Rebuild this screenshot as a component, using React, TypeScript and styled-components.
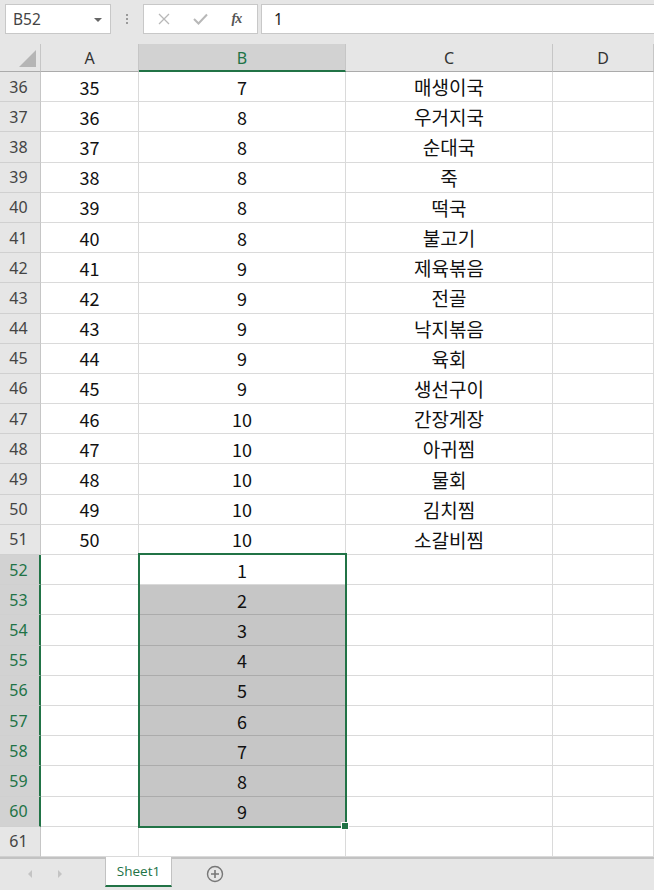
import React from "react";
import styled, { createGlobalStyle, css } from "styled-components";

const GREEN = "#217346";
const FONT = `"Noto Sans CJK KR", "Noto Sans", sans-serif`;

const Global = createGlobalStyle`
  html, body { margin: 0; padding: 0; background: #e6e6e6; }
  body { font-family: ${FONT}; width: 654px; height: 890px; overflow: hidden; }
`;

const Page = styled.div`
  width: 654px;
  height: 890px;
  display: flex;
  flex-direction: column;
  background: #e6e6e6;
  overflow: hidden;
`;

const FormulaBar = styled.div`
  height: 30px;
  padding: 4px 0 0 5px;
  display: flex;
  align-items: stretch;
  flex-shrink: 0;
`;

const Box = styled.div`
  background: #fff;
  border: 1px solid #c8c8c8;
  box-sizing: border-box;
  display: flex;
  align-items: center;
`;

const NameBox = styled(Box)`
  width: 106px;
  padding: 0 8px 0 7px;
  justify-content: space-between;
  font-size: 15.5px;
  color: #444;
  font-family: "Noto Sans", sans-serif;
`;

const DropArrow = styled.span`
  width: 0;
  height: 0;
  border-left: 4px solid transparent;
  border-right: 4px solid transparent;
  border-top: 4px solid #666;
  margin-top: 1px;
`;

const Dots = styled.div`
  width: 32px;
  display: flex;
  flex-direction: column;
  align-items: center;
  justify-content: center;
  gap: 2px;
  span {
    width: 2px;
    height: 2px;
    background: #9a9a9a;
  }
`;

const FxBox = styled(Box)`
  width: 115px;
  justify-content: space-around;
  padding: 0 4px 0 2px;
`;

const FxText = styled.span`
  font-family: "Liberation Serif", serif;
  font-style: italic;
  font-weight: bold;
  color: #555;
  font-size: 14px;
  letter-spacing: -1px;
`;

const Input = styled(Box)`
  flex: 1;
  margin-left: 3px;
  padding-left: 12px;
  font-size: 15.5px;
  color: #222;
  border-right: none;
  font-family: "Noto Sans", sans-serif;
`;

const Spacer = styled.div`
  height: 10px;
  flex-shrink: 0;
`;

const Grid = styled.div`
  display: grid;
  grid-template-columns: 41px 98px 207px 207px 101px;
  grid-template-rows: 28px repeat(26, 30.2px);
  background: #fff;
  flex-shrink: 0;
`;

const CellBase = styled.div<{ $r: number; $c: number }>`
  grid-row: ${(p) => p.$r};
  grid-column: ${(p) => p.$c};
  box-sizing: border-box;
  display: flex;
  align-items: center;
  justify-content: center;
  overflow: hidden;
  white-space: nowrap;
`;

const Corner = styled(CellBase)`
  background: #e6e6e6;
  border-right: 1px solid #c6c6c6;
  border-bottom: 1px solid #ababab;
  align-items: flex-end;
  justify-content: flex-end;
  padding: 0 4px 4px 0;
`;

const CornerTri = styled.span`
  width: 0;
  height: 0;
  border-left: 17px solid transparent;
  border-bottom: 17px solid #b5b5b5;
`;

const ColHead = styled(CellBase)<{ $sel?: boolean }>`
  background: ${(p) => (p.$sel ? "#d2d2d2" : "#e6e6e6")};
  color: ${(p) => (p.$sel ? GREEN : "#333")};
  border-right: 1px solid #c6c6c6;
  border-bottom: ${(p) => (p.$sel ? `2px solid ${GREEN}` : "1px solid #ababab")};
  font-size: 16px;
  padding-top: 1px;
  font-family: "Noto Sans", sans-serif;
`;

const RowHead = styled(CellBase)<{ $sel?: boolean }>`
  background: ${(p) => (p.$sel ? "#d2d2d2" : "#e6e6e6")};
  color: ${(p) => (p.$sel ? GREEN : "#444")};
  border-right: ${(p) => (p.$sel ? `2px solid ${GREEN}` : "1px solid #c6c6c6")};
  border-bottom: 1px solid #d0d0d0;
  font-size: 16px;
  padding-right: ${(p) => (p.$sel ? "2px" : "3px")};
  font-family: "Noto Sans", sans-serif;
`;

const Cell = styled(CellBase)<{ $fill?: boolean; $ko?: boolean }>`
  border-right: 1px solid #dadada;
  border-bottom: 1px solid #dadada;
  font-size: ${(p) => (p.$ko ? "19px" : "18px")};
  color: #111;
  ${(p) =>
    p.$fill &&
    css`
      background: #c6c6c6;
      border-bottom-color: #ababab;
      border-right-color: #c6c6c6;
    `}
`;

const Selection = styled.div`
  grid-row: 18 / 27;
  grid-column: 3;
  margin: -2px -1px -1px -1px;
  border: 2px solid ${GREEN};
  position: relative;
  pointer-events: none;
  z-index: 2;
`;

const Handle = styled.span`
  position: absolute;
  right: -4px;
  bottom: -4px;
  width: 6px;
  height: 6px;
  background: ${GREEN};
  border: 1px solid #fff;
`;

const TabBar = styled.div`
  flex: 1;
  border-top: 2px solid #c2c2c2;
  background: #e6e6e6;
  display: flex;
  align-items: stretch;
`;

const NavArrows = styled.div`
  width: 105px;
  display: flex;
  align-items: center;
  padding-left: 28px;
  gap: 26px;
  box-sizing: border-box;
`;

const Arrow = styled.span<{ $dir: "l" | "r" }>`
  width: 0;
  height: 0;
  border-top: 4px solid transparent;
  border-bottom: 4px solid transparent;
  ${(p) =>
    p.$dir === "l"
      ? css`border-right: 4px solid #c4c4c4;`
      : css`border-left: 4px solid #c4c4c4;`}
`;

const Tab = styled.div`
  width: 67px;
  background: #fff;
  border-left: 1px solid #c2c2c2;
  border-right: 1px solid #c2c2c2;
  border-bottom: 2px solid ${GREEN};
  margin-top: -2px;
  margin-bottom: 3px;
  box-sizing: border-box;
  display: flex;
  align-items: center;
  justify-content: center;
  color: ${GREEN};
  font-size: 13.5px;
  font-family: "Open Sans", "Noto Sans", sans-serif;
`;

const AddBtn = styled.div`
  margin-left: 34px;
  display: flex;
  align-items: center;
`;

const data: [string, string, string][] = [
  ["35", "7", "매생이국"],
  ["36", "8", "우거지국"],
  ["37", "8", "순대국"],
  ["38", "8", "죽"],
  ["39", "8", "떡국"],
  ["40", "8", "불고기"],
  ["41", "9", "제육볶음"],
  ["42", "9", "전골"],
  ["43", "9", "낙지볶음"],
  ["44", "9", "육회"],
  ["45", "9", "생선구이"],
  ["46", "10", "간장게장"],
  ["47", "10", "아귀찜"],
  ["48", "10", "물회"],
  ["49", "10", "김치찜"],
  ["50", "10", "소갈비찜"],
  ["", "1", ""],
  ["", "2", ""],
  ["", "3", ""],
  ["", "4", ""],
  ["", "5", ""],
  ["", "6", ""],
  ["", "7", ""],
  ["", "8", ""],
  ["", "9", ""],
  ["", "", ""],
];

export default function App() {
  const cols = ["A", "B", "C", "D"];
  return (
    <Page>
      <Global />
      <FormulaBar>
        <NameBox>
          <span>B52</span>
          <DropArrow />
        </NameBox>
        <Dots>
          <span />
          <span />
          <span />
        </Dots>
        <FxBox>
          <svg width="12" height="12" viewBox="0 0 12 12">
            <path d="M1 1 L11 11 M11 1 L1 11" stroke="#b8b8b8" strokeWidth="1.3" />
          </svg>
          <svg width="15" height="12" viewBox="0 0 15 12">
            <path d="M1 6 L5.5 10.5 L14 1.5" stroke="#b8b8b8" strokeWidth="2" fill="none" />
          </svg>
          <FxText>fx</FxText>
        </FxBox>
        <Input>1</Input>
      </FormulaBar>
      <Spacer />
      <Grid>
        <Corner $r={1} $c={1}>
          <CornerTri />
        </Corner>
        {cols.map((c, i) => (
          <ColHead key={c} $r={1} $c={i + 2} $sel={c === "B"}>
            {c}
          </ColHead>
        ))}
        {data.map((row, i) => {
          const rowNum = 36 + i;
          const r = i + 2;
          const sel = rowNum >= 52 && rowNum <= 60;
          return (
            <React.Fragment key={rowNum}>
              <RowHead $r={r} $c={1} $sel={sel}>
                {rowNum}
              </RowHead>
              <Cell $r={r} $c={2}>{row[0]}</Cell>
              <Cell $r={r} $c={3} $fill={rowNum >= 53 && rowNum <= 60}>
                {row[1]}
              </Cell>
              <Cell $r={r} $c={4} $ko>
                {row[2]}
              </Cell>
              <Cell $r={r} $c={5} />
            </React.Fragment>
          );
        })}
        <Selection>
          <Handle />
        </Selection>
      </Grid>
      <TabBar>
        <NavArrows>
          <Arrow $dir="l" />
          <Arrow $dir="r" />
        </NavArrows>
        <Tab>Sheet1</Tab>
        <AddBtn>
          <svg width="18" height="18" viewBox="0 0 18 18">
            <circle cx="9" cy="9" r="7.5" fill="none" stroke="#777" strokeWidth="1.4" />
            <path d="M9 5 V13 M5 9 H13" stroke="#777" strokeWidth="1.6" />
          </svg>
        </AddBtn>
      </TabBar>
    </Page>
  );
}
